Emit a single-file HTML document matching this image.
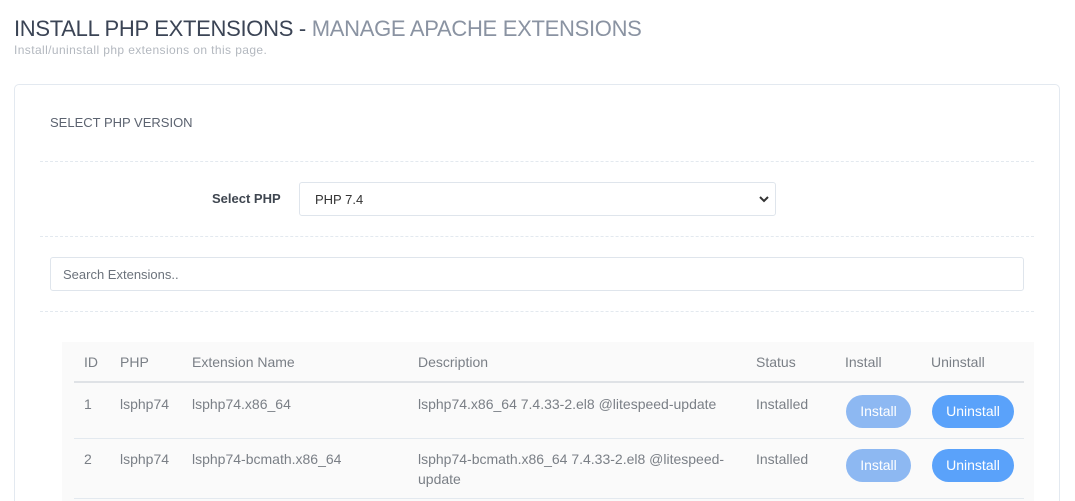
<!DOCTYPE html>
<html style="overflow:hidden;height:501px"><head><style>
*{box-sizing:border-box;margin:0;padding:0}
body{width:1075px;height:501px;overflow:hidden;background:#fff;font-family:"Liberation Sans",sans-serif;position:relative}
.a{position:absolute;white-space:nowrap}
.t{font-size:22px;font-weight:300;color:#3b4455;letter-spacing:-0.3px}
.dash{position:absolute;left:40px;width:994px;border-top:1px dashed #e3e9ef}
.td{position:absolute;font-size:14px;color:#7a7f86}
.btn{position:absolute;height:33px;border-radius:17px;color:#fff;font-size:14px;text-align:center;line-height:33px}
</style></head><body>
<div class="a t" style="left:14px;top:16px">INSTALL PHP EXTENSIONS - <span style="color:#8a93a2">MANAGE APACHE EXTENSIONS</span></div>
<div class="a" style="left:14px;top:43px;font-size:12px;color:#b3b8bf;letter-spacing:0.4px">Install/uninstall php extensions on this page.</div>
<div class="a" style="left:14px;top:84px;width:1046px;height:417px;border:1px solid #e3e9f0;border-bottom:none;border-radius:5px 5px 0 0"></div>
<div class="a" style="left:50px;top:115px;font-size:13px;color:#5c6370">SELECT PHP VERSION</div>
<div class="dash" style="top:161px"></div>
<div class="a" style="left:212px;top:191px;font-size:13px;font-weight:bold;color:#3f4650">Select PHP</div>
<div class="a" style="left:299px;top:182px;width:477px;height:34px;border:1px solid #dfe5ec;border-radius:3px;font-size:13px;color:#333;padding:9px 0 0 15px">PHP 7.4
<svg style="position:absolute;right:6px;top:13px" width="10" height="7" viewBox="0 0 10 7"><path d="M1 1l4 4 4-4" stroke="#333" stroke-width="2" fill="none"/></svg></div>
<div class="dash" style="top:236px"></div>
<div class="a" style="left:50px;top:257px;width:974px;height:34px;border:1px solid #dfe5ec;border-radius:3px;font-size:13px;color:#6c737c;padding:9px 0 0 12px">Search Extensions..</div>
<div class="dash" style="top:311px"></div>
<div class="a" style="left:62px;top:342px;width:972px;height:159px;background:#fafafa"></div>
<div class="a" style="left:74px;top:381px;width:950px;height:2px;background:#dfe2e6"></div>
<div class="a" style="left:74px;top:438px;width:950px;height:1px;background:#e3e9ef"></div>
<div class="a" style="left:74px;top:498px;width:950px;height:1px;background:#e3e9ef"></div>
<div class="td" style="left:84px;top:354px">ID</div>
<div class="td" style="left:120px;top:354px">PHP</div>
<div class="td" style="left:192px;top:354px">Extension Name</div>
<div class="td" style="left:418px;top:354px">Description</div>
<div class="td" style="left:756px;top:354px">Status</div>
<div class="td" style="left:845px;top:354px">Install</div>
<div class="td" style="left:931px;top:354px">Uninstall</div>
<div class="td" style="left:84px;top:396px">1</div>
<div class="td" style="left:120px;top:396px">lsphp74</div>
<div class="td" style="left:192px;top:396px">lsphp74.x86_64</div>
<div class="td" style="left:418px;top:396px">lsphp74.x86_64 7.4.33-2.el8 @litespeed-update</div>
<div class="td" style="left:756px;top:396px">Installed</div>
<div class="btn" style="left:846px;top:395px;width:65px;background:#8db8f2">Install</div>
<div class="btn" style="left:932px;top:395px;width:82px;background:#5aa2fa">Uninstall</div>
<div class="td" style="left:84px;top:451px">2</div>
<div class="td" style="left:120px;top:451px">lsphp74</div>
<div class="td" style="left:192px;top:451px">lsphp74-bcmath.x86_64</div>
<div class="td" style="left:418px;line-height:20px;top:449px">lsphp74-bcmath.x86_64 7.4.33-2.el8 @litespeed-<br>update</div>
<div class="td" style="left:756px;top:451px">Installed</div>
<div class="btn" style="left:846px;top:449px;width:65px;background:#8db8f2">Install</div>
<div class="btn" style="left:932px;top:449px;width:82px;background:#5aa2fa">Uninstall</div>
</body></html>
